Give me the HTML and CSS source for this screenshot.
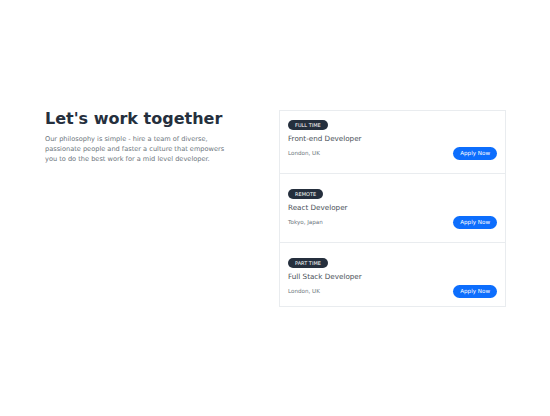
FILE: index.html
```html
<!DOCTYPE html>
<html lang="en">
<head>
    <meta charset="UTF-8">
    <meta name="viewport" content="width=device-width, initial-scale=1.0">
    <title>Careers</title>
    <link rel="stylesheet" href="styles.css">
</head>
<body>
    <div class="container">
        <div class="intro">
            <h1>Let's work together</h1>
            <p>Our philosophy is simple - hire a team of diverse, passionate people and faster a culture that empowers you to do the best work for a mid level developer.</p>
        </div>
        <ul class="jobs">
            <li class="job">
                <span class="badge">FULL TIME</span>
                <h2>Front-end Developer</h2>
                <div class="job-footer">
                    <span class="location">London, UK</span>
                    <a href="#" class="apply">Apply Now</a>
                </div>
            </li>
            <li class="job">
                <span class="badge">REMOTE</span>
                <h2>React Developer</h2>
                <div class="job-footer">
                    <span class="location">Tokyo, Japan</span>
                    <a href="#" class="apply">Apply Now</a>
                </div>
            </li>
            <li class="job">
                <span class="badge">PART TIME</span>
                <h2>Full Stack Developer</h2>
                <div class="job-footer">
                    <span class="location">London, UK</span>
                    <a href="#" class="apply">Apply Now</a>
                </div>
            </li>
        </ul>
    </div>
</body>
</html>
```
FILE: styles.css
```css
body {
    font-family: "DejaVu Sans", sans-serif;
    background-color: #fff;
    color: #212529;
    margin: 0;
    padding: 0 0 0 1px;
    display: flex;
    justify-content: center;
    align-items: center;
    height: 100vh;
}

.container {
    width: 461px;
    display: flex;
    justify-content: space-between;
    align-items: flex-start;
}

.intro {
    width: 185px;
}

.intro h1 {
    font-size: 16px;
    line-height: 18px;
    font-weight: bold;
    color: #252f3d;
    margin: 0 0 6px;
    white-space: nowrap;
}

.intro p {
    font-size: 6.6px;
    line-height: 10px;
    color: #6c757d;
    margin: 0;
}

.jobs {
    list-style-type: none;
    padding: 0;
    margin: 0;
    width: 227px;
    box-sizing: border-box;
    border: 1px solid #e9ecef;
}

.job {
    display: flex;
    flex-direction: column;
    align-items: flex-start;
    padding: 15px 8px 13px;
    border-bottom: 1px solid #e9ecef;
}

    .job:first-child {
        padding-top: 9px;
    }

    .job:last-child {
        padding-bottom: 8px;
        border-bottom: none;
    }

.badge {
    display: block;
    background: #252f3d;
    color: #fff;
    font-size: 5px;
    line-height: 10px;
    padding: 0 7px;
    border-radius: 5px;
}

.job h2 {
    font-size: 7.2px;
    line-height: 10px;
    font-weight: normal;
    color: #495057;
    margin: 4px 0 3px;
}

.job-footer {
    align-self: stretch;
    display: flex;
    justify-content: space-between;
    align-items: center;
}

.location {
    font-size: 5.6px;
    color: #6c757d;
}

.apply {
    display: inline-block;
    background: #0d6efd;
    color: #fff;
    font-size: 5.6px;
    line-height: 13px;
    padding: 0 7px;
    border-radius: 7px;
    text-decoration: none;
}
```
